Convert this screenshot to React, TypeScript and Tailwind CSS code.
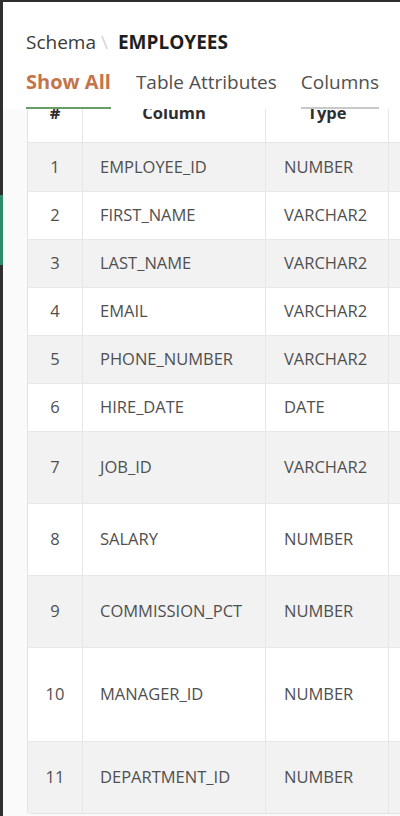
const rows: { n: number; name: string; type: string; h: string }[] = [
  { n: 1, name: 'EMPLOYEE_ID', type: 'NUMBER', h: 'h-[49px]' },
  { n: 2, name: 'FIRST_NAME', type: 'VARCHAR2', h: 'h-[48px]' },
  { n: 3, name: 'LAST_NAME', type: 'VARCHAR2', h: 'h-[48px]' },
  { n: 4, name: 'EMAIL', type: 'VARCHAR2', h: 'h-[48px]' },
  { n: 5, name: 'PHONE_NUMBER', type: 'VARCHAR2', h: 'h-[48px]' },
  { n: 6, name: 'HIRE_DATE', type: 'DATE', h: 'h-[48px]' },
  { n: 7, name: 'JOB_ID', type: 'VARCHAR2', h: 'h-[72px]' },
  { n: 8, name: 'SALARY', type: 'NUMBER', h: 'h-[72px]' },
  { n: 9, name: 'COMMISSION_PCT', type: 'NUMBER', h: 'h-[72px]' },
  { n: 10, name: 'MANAGER_ID', type: 'NUMBER', h: 'h-[94px]' },
  { n: 11, name: 'DEPARTMENT_ID', type: 'NUMBER', h: 'h-[71px]' },
];

export default function App() {
  return (
    <div
      className="w-[400px] h-[816px] overflow-hidden flex border-t-2 border-[#2f2f2f] bg-[#fafafa]"
      style={{ fontFamily: '"Open Sans", "Noto Sans", sans-serif' }}
    >
      {/* left window edge */}
      <div className="w-[3px] flex flex-col shrink-0">
        <div className="h-[193px] bg-[#2f2f2f]" />
        <div className="h-[70px] bg-[#2e8a68]" />
        <div className="flex-1 bg-[#2f2f2f]" />
      </div>

      <div className="flex-1 flex flex-col min-w-0">
        {/* header */}
        <div className="bg-white pl-[23px] pt-[28px] relative z-10">
          <div className="flex items-center h-[24px] text-[19px] leading-[24px]">
            <span className="text-[#3a3a3a]">Schema</span>
            <span className="text-[#d4d4d4] ml-[5px] mr-[10px]">\</span>
            <span className="font-bold text-[#1e1e1e]">EMPLOYEES</span>
          </div>
          <div className="flex items-baseline mt-[16px] text-[19px] leading-[24px] whitespace-nowrap">
            <div className="pb-[13px] border-b-2 border-[#6a9c68] font-bold text-[20px] text-[#c4744d]">Show All</div>
            <div className="pb-[13px] ml-[25px] border-b-2 border-transparent text-[#505050]">Table Attributes</div>
            <div className="pb-[13px] ml-[24px] border-b-2 border-[#c9c9c9] text-[#505050]">Columns</div>
          </div>
        </div>

        {/* table */}
        <div className="flex-1 overflow-hidden pl-[24px]">
          <div className="-mt-[24px] w-[420px] border-l border-b border-[#e2e2e2] rounded-bl-[4px] bg-white">
            <div className="flex h-[58px] items-center font-bold text-[16.5px] text-[#2e2e2e] border-b border-[#e6e6e6]">
              <div className="w-[55px] h-full flex items-center justify-center border-r border-[#e6e6e6]">#</div>
              <div className="w-[183px] h-full flex items-center justify-center border-r border-[#e6e6e6]">Column</div>
              <div className="w-[123px] h-full flex items-center justify-center border-r border-[#e6e6e6]">Type</div>
              <div className="flex-1" />
            </div>
            {rows.map((r, i) => (
              <div
                key={r.n}
                className={`flex ${r.h} items-center text-[16.5px] text-[#505050] ${
                  i % 2 === 0 ? 'bg-[#f2f2f2]' : 'bg-white'
                } ${i < rows.length - 1 ? 'border-b border-[#e8e8e8]' : ''}`}
              >
                <div className="w-[55px] h-full flex items-center justify-center border-r border-[#e6e6e6]">{r.n}</div>
                <div className="w-[183px] h-full flex items-center pl-[17px] border-r border-[#e6e6e6] whitespace-nowrap">{r.name}</div>
                <div className="w-[123px] h-full flex items-center pl-[18px] border-r border-[#e6e6e6]">{r.type}</div>
                <div className="flex-1" />
              </div>
            ))}
          </div>
        </div>
      </div>
    </div>
  );
}
